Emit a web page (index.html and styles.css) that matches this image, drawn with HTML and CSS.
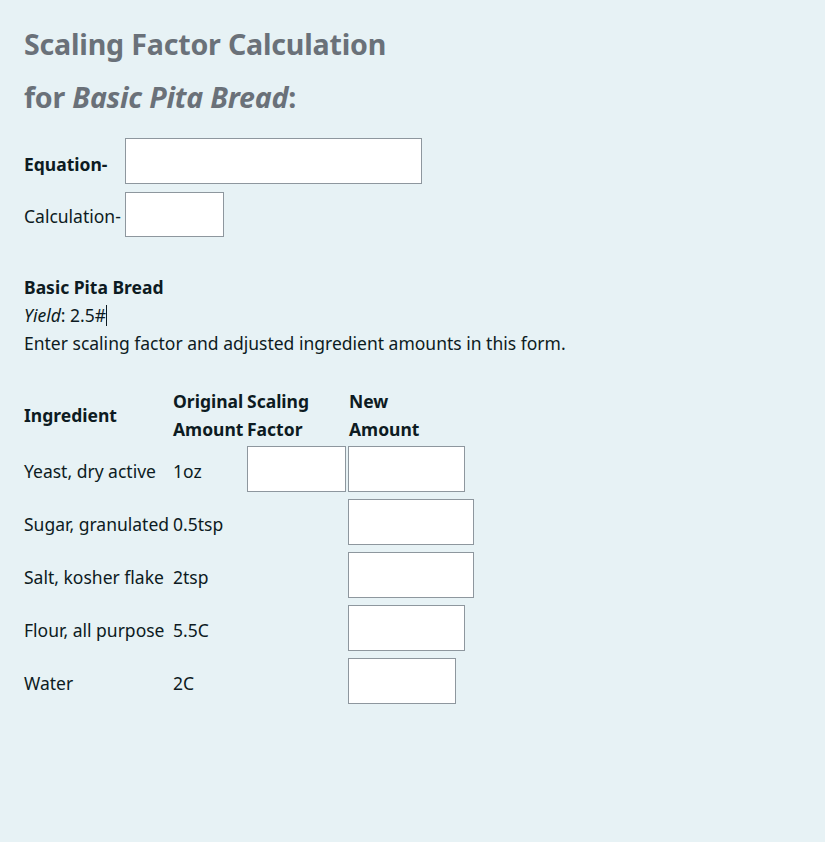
FILE: index.html
```html
<!DOCTYPE html>
<html>
<head>
<meta charset="utf-8">
<link rel="stylesheet" href="styles.css">
</head>
<body>
<div class="page">
  <h1 class="title">Scaling Factor Calculation</h1>
  <h1 class="title">for <em>Basic Pita Bread</em>:</h1>

  <div class="field eq">
    <label class="lbl-bold">Equation-</label>
    <span class="box box-eq"></span>
  </div>
  <div class="field calc">
    <label class="lbl">Calculation-</label>
    <span class="box box-calc"></span>
  </div>

  <div class="recipe">
    <div class="rname">Basic Pita Bread</div>
    <div><em>Yield</em>: 2.5#<span class="caret"></span></div>
    <div>Enter scaling factor and adjusted ingredient amounts in this form.</div>
  </div>

  <table class="tbl">
    <colgroup>
      <col class="c1"><col class="c2"><col class="c3"><col class="c4">
    </colgroup>
    <thead>
      <tr>
        <th>Ingredient</th>
        <th>Original Amount</th>
        <th>Scaling Factor</th>
        <th class="th-new">New Amount</th>
      </tr>
    </thead>
    <tbody>
      <tr>
        <td>Yeast, dry active</td><td>1oz</td>
        <td><span class="box box-sf"></span></td>
        <td><span class="box" style="width:117px"></span></td>
      </tr>
      <tr>
        <td>Sugar, granulated</td><td>0.5tsp</td><td></td>
        <td><span class="box" style="width:126px"></span></td>
      </tr>
      <tr>
        <td>Salt, kosher flake</td><td>2tsp</td><td></td>
        <td><span class="box" style="width:126px"></span></td>
      </tr>
      <tr>
        <td>Flour, all purpose</td><td>5.5C</td><td></td>
        <td><span class="box" style="width:117px"></span></td>
      </tr>
      <tr>
        <td>Water</td><td>2C</td><td></td>
        <td><span class="box" style="width:108px"></span></td>
      </tr>
    </tbody>
  </table>
</div>
</body>
</html>
```

FILE: styles.css
```css
html, body {
  margin: 0;
  padding: 0;
  background: #e7f2f5;
}
body {
  font-family: "Noto Sans", "Open Sans", sans-serif;
  font-size: 17.5px;
  color: #0d1b22;
}
.page {
  padding: 17px 24px 40px 24px;
  width: 777px;
  height: 785px;
}
.title {
  margin: 0;
  font-size: 28.6px;
  font-weight: 700;
  color: #6a7179;
  line-height: 53px;
  letter-spacing: -0.2px;
}
.title em {
  font-style: italic;
}
.field {
  display: flex;
  align-items: center;
}
.eq {
  margin-top: 15px;
}
.calc {
  margin-top: 8px;
}
.lbl-bold {
  font-weight: 700;
  width: 101px;
  padding-top: 5px;
}
.lbl {
  width: 101px;
  white-space: nowrap;
  padding-top: 3px;
}
.box {
  display: block;
  box-sizing: border-box;
  background: #fff;
  border: 1px solid #8e979e;
  height: 46px;
}
.box-eq {
  width: 297px;
}
.box-calc {
  width: 99px;
  height: 45px;
}
.recipe {
  margin-top: 36px;
  line-height: 28px;
}
.rname {
  font-weight: 700;
}
.caret {
  display: inline-block;
  width: 1px;
  height: 21px;
  background: #0d1b22;
  vertical-align: -4px;
}
.tbl {
  margin-top: 30px;
  border-collapse: collapse;
  table-layout: fixed;
  width: 404px;
}
.c1 { width: 149px; }
.c2 { width: 74px; }
.c3 { width: 101px; }
.c4 { width: 80px; }
.tbl th {
  text-align: left;
  font-weight: 700;
  line-height: 28px;
  padding: 0 0 1px 0;
  white-space: normal;
}
.tbl th.th-new {
  padding-left: 1px;
}
.tbl td {
  padding: 0;
  height: 53px;
  vertical-align: middle;
  white-space: nowrap;
}
.tbl td .box {
  margin-top: -4px;
}
.tbl td .box-sf {
  width: 99px;
}
```
